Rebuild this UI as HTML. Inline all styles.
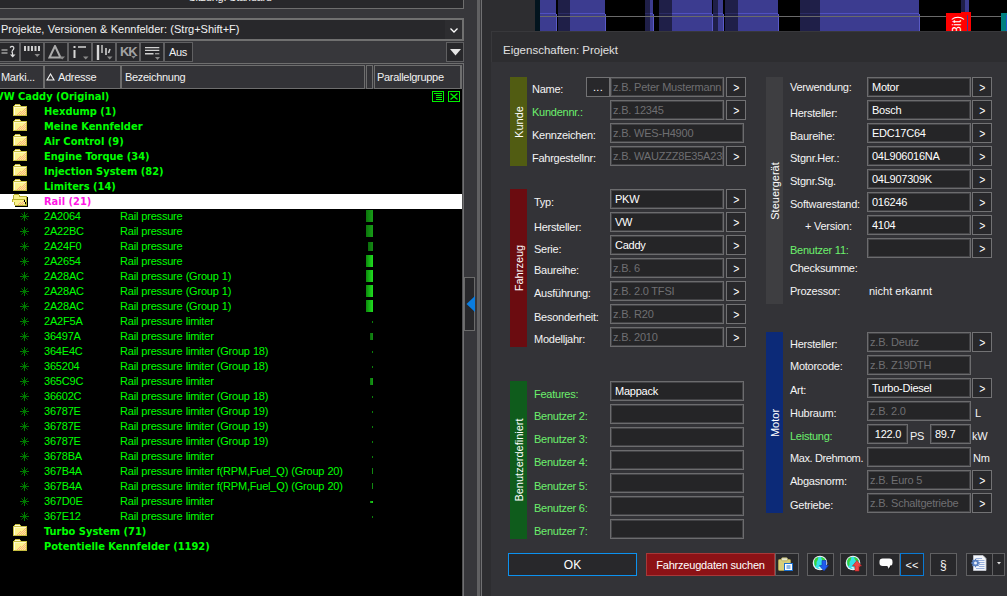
<!DOCTYPE html>
<html lang="de"><head><meta charset="utf-8"><title>Eigenschaften: Projekt</title>
<style>
html,body{margin:0;padding:0;background:#2d2d30;}
body{width:1007px;height:596px;overflow:hidden;position:relative;font-family:"Liberation Sans",sans-serif;font-size:11px;color:#fff;letter-spacing:-0.25px;}
.ab{position:absolute;display:block}
.t{position:absolute;white-space:nowrap;line-height:15px;height:15px}
.tb{font-family:"DejaVu Sans Condensed","Liberation Sans",sans-serif;font-weight:bold;font-size:11px;color:#00ff00;letter-spacing:0}
.tr{color:#00ff00;font-size:11px;letter-spacing:-0.2px;word-spacing:0.3px}
.btn{position:absolute;box-sizing:border-box;border:1px solid #606062;background:#28282b}
.hd{position:absolute;box-sizing:border-box;top:65px;height:24px;background:#333337;border:1px solid #6e6e6e;line-height:23px;color:#f0f0f0;font-size:11px;white-space:nowrap;overflow:hidden;letter-spacing:-0.3px}
.in{position:absolute;box-sizing:border-box;height:20px;border:1px solid #6c6c6e;box-shadow:inset 0 0 0 1px #434346;background:#252527;color:#fff;font-size:11px;line-height:19px;padding:0 0 0 4px;white-space:nowrap;overflow:hidden}
.in.ph{color:#6f6f72;padding-left:2px;letter-spacing:-0.2px}
.gt{position:absolute;box-sizing:border-box;width:20px;height:20px;border:1px solid #727274;background:#28282b;color:#fff;font-size:11px;line-height:19px;text-align:center;letter-spacing:0}
.gt b{display:inline-block;font-weight:normal;transform:scale(0.95,1.2)}
.lb{position:absolute;white-space:nowrap;font-size:11px;line-height:14px;color:#f4f4f4}
.lb.g{color:#6cf06c}
.strip{position:absolute;width:17px}
.strip span{position:absolute;left:50%;top:50%;white-space:nowrap;font-size:11px;line-height:14px;letter-spacing:0;color:#fff;transform:translate(-50%,-50%) rotate(-90deg)}
</style></head><body>
<svg width="0" height="0" style="position:absolute"><defs><pattern id="dz" width="2" height="2" patternUnits="userSpaceOnUse"><rect width="1" height="1" fill="#f9ae80"/><rect x="1" y="1" width="1" height="1" fill="#f9ae80"/></pattern></defs></svg>

<div class="ab" style="left:0;top:0;width:477px;height:596px;background:#37373b"></div>
<div class="ab" style="left:0;top:0;width:463px;height:8px;background:#28282b;border-right:1px solid #6e6e6e;border-bottom:1px solid #6e6e6e;overflow:hidden"><span class="t" style="left:188.5px;top:-10px;font-size:11px;color:#eee">Sitzung: Standard</span></div>
<div class="ab" style="left:-2px;top:18px;width:462px;height:19px;border:2px solid #707070;background:#28282b"><div class="ab" style="right:0;top:0;width:17px;height:19px;background:#2d2d30"></div><span class="t" style="left:1px;top:2px;font-size:11px;color:#f2f2f2;letter-spacing:0;word-spacing:0.3px">Projekte, Versionen &amp; Kennfelder: (Strg+Shift+F)</span><svg class="ab" style="left:450px;top:8px" width="8" height="5" viewBox="0 0 8 5"><path d="M0.5 0.5 L4 4 L7.5 0.5" stroke="#fff" stroke-width="1.3" fill="none"/></svg></div>
<div class="btn" style="left:-4px;top:42px;width:24px;height:20px"></div>
<div class="btn" style="left:20px;top:42px;width:24px;height:20px"></div>
<div class="btn" style="left:44px;top:42px;width:24px;height:20px"></div>
<div class="btn" style="left:68px;top:42px;width:24px;height:20px"></div>
<div class="btn" style="left:92px;top:42px;width:24px;height:20px"></div>
<div class="btn" style="left:116px;top:42px;width:24px;height:20px"></div>
<div class="btn" style="left:140px;top:42px;width:24px;height:20px"></div>
<div class="btn" style="left:164px;top:42px;width:29px;height:20px;color:#f0f0f0;font-size:11px;line-height:18px;padding-left:4px;letter-spacing:-0.4px">Aus</div>
<div class="btn" style="left:446px;top:42px;width:18px;height:20px"><svg class="ab" style="left:3px;top:6px" width="11" height="7" viewBox="0 0 11 7"><path d="M0 0 H11 L5.5 6.5 Z" fill="#e6e6e6"/></svg></div>
<svg class="ab" style="left:1px;top:49px" width="7" height="5" viewBox="0 0 7 5"><path d="M0.5 1 H6.5 M0.5 4 H6.5" stroke="#d8d8d8" stroke-width="1"/></svg>
<svg class="ab" style="left:9px;top:45px" width="9" height="14" viewBox="0 0 9 14"><path d="M1 2.5 Q3 0.5 4.5 2 Q5.5 3.5 3.5 5.5 Q2.5 7 3.5 8 V10" stroke="#e0e0e0" stroke-width="1.2" fill="none"/><path d="M1 9.5 H6.5 L3.7 12.5 Z" fill="#e0e0e0"/></svg>
<svg class="ab" style="left:24px;top:46px" width="17" height="12" viewBox="0 0 17 12"><path d="M1 0 V5 M4.5 0 V5 M8 0 V5 M11.5 0 V5 M15 0 V5" stroke="#cfcfcf" stroke-width="2" fill="none"/><path d="M10.5 8 H16 L13.2 11 Z" fill="#8a8a8a"/></svg>
<svg class="ab" style="left:48px;top:45px" width="18" height="15" viewBox="0 0 18 15"><path d="M7 1 L1.5 12.5 H12.5 Z" stroke="#aaa" stroke-width="2" fill="none"/><path d="M11.5 11.5 H17 L14.2 14.5 Z" fill="#8a8a8a"/></svg>
<svg class="ab" style="left:73px;top:46px" width="17" height="14" viewBox="0 0 17 14"><path d="M1.5 0 V2 M1.5 4 V12 " stroke="#d5d5d5" stroke-width="2" fill="none"/><path d="M5 1 H13" stroke="#d5d5d5" stroke-width="1.5"/><path d="M10 10.5 H15.5 L12.7 13.5 Z" fill="#8a8a8a"/></svg>
<svg class="ab" style="left:96px;top:45px" width="18" height="15" viewBox="0 0 18 15"><path d="M2 0 V15" stroke="#d8d8d8" stroke-width="2.4"/><path d="M6 0 V8" stroke="#bbb" stroke-width="1.6"/><path d="M10 3 V10" stroke="#d0d0d0" stroke-width="1.6"/><path d="M14 4 L12.5 8" stroke="#d0d0d0" stroke-width="1.6"/><path d="M11 11.5 H16.5 L13.7 14.5 Z" fill="#8a8a8a"/></svg>
<span class="t" style="left:120px;top:43.5px;font-size:13px;font-weight:bold;color:#a2a2a2;letter-spacing:-1.1px;line-height:16px">KK</span><svg class="ab" style="left:131px;top:56px" width="5" height="3" viewBox="0 0 6 4"><path d="M0 0 H6 L3 3.5 Z" fill="#8a8a8a"/></svg>
<svg class="ab" style="left:145px;top:46px" width="16" height="15" viewBox="0 0 16 15"><path d="M0 1.6 H14.3 M0 4.4 H14.3 M0 7.7 H8.5" stroke="#d2d2d2" stroke-width="1.4"/><path d="M10 7.7 H14.3" stroke="#9a9a9a" stroke-width="1.4"/><path d="M10 11 H15 L12.5 14 Z" fill="#8a8a8a"/></svg>
<div class="ab" style="left:0;top:63px;width:464px;height:1px;background:#6e6e6e"></div>
<div class="hd" style="left:-1px;width:45px;padding-left:1px">Marki...</div>
<div class="hd" style="left:44px;width:77px;padding-left:13px">Adresse<svg class="ab" style="left:1px;top:7px" width="9" height="8" viewBox="0 0 9 8"><path d="M4.5 1 L8 7 H1 Z" stroke="#f4f4f4" stroke-width="1.1" fill="none"/></svg></div>
<div class="hd" style="left:121px;width:244px;padding-left:3px">Bezeichnung</div>
<div class="hd" style="left:366px;width:7px"></div>
<div class="hd" style="left:374px;width:88px;padding-left:2px;border-right-width:2px">Parallelgruppe</div>
<div class="ab" style="left:462px;top:89px;width:1px;height:507px;background:#505052"></div><div class="ab" style="left:461px;top:524px;width:1px;height:6px;background:#3a3a3c"></div><div class="ab" style="left:463px;top:63px;width:1px;height:533px;background:#707072"></div>
<div class="ab" style="left:0;top:89px;width:462px;height:507px;background:#000;overflow:hidden">
<span class="t tb" style="left:-4px;top:0">VW Caddy (Original)</span>
<svg class="ab" style="left:432px;top:2px" width="12" height="11" viewBox="0 0 12 11"><rect x="0.5" y="0.5" width="11" height="10" fill="none" stroke="#00f000"/><path d="M2 2.5 H10 M4 4.5 H10 M4 6.5 H10 M4 8.5 H10" stroke="#00f000" stroke-width="1" shape-rendering="crispEdges"/></svg>
<svg class="ab" style="left:448px;top:2px" width="12" height="11" viewBox="0 0 12 11"><rect x="0.5" y="0.5" width="11" height="10" fill="none" stroke="#00f000"/><path d="M2.5 2.5 L9.5 8.5 M9.5 2.5 L2.5 8.5" stroke="#00f000" stroke-width="1.4"/></svg>
<svg class="ab" style="left:13px;top:15px" width="14" height="12" viewBox="0 0 14 12" shape-rendering="crispEdges"><path d="M0 2 H1 L2 0 H7 L8 2 H14 V12 H0 Z" fill="#c6bd40"/><rect x="1" y="3" width="12" height="8" fill="#fdf38c"/><rect x="2" y="1" width="5" height="1" fill="#fffbd6"/><rect x="1" y="3" width="12" height="1" fill="#fff9c4"/><rect x="1" y="3" width="1" height="8" fill="#fffde4"/><polygon points="13,4 13,11 2,11" fill="url(#dz)"/></svg>
<span class="t tb" style="left:44px;top:15px">Hexdump (1)</span>
<svg class="ab" style="left:13px;top:30px" width="14" height="12" viewBox="0 0 14 12" shape-rendering="crispEdges"><path d="M0 2 H1 L2 0 H7 L8 2 H14 V12 H0 Z" fill="#c6bd40"/><rect x="1" y="3" width="12" height="8" fill="#fdf38c"/><rect x="2" y="1" width="5" height="1" fill="#fffbd6"/><rect x="1" y="3" width="12" height="1" fill="#fff9c4"/><rect x="1" y="3" width="1" height="8" fill="#fffde4"/><polygon points="13,4 13,11 2,11" fill="url(#dz)"/></svg>
<span class="t tb" style="left:44px;top:30px">Meine Kennfelder</span>
<svg class="ab" style="left:13px;top:45px" width="14" height="12" viewBox="0 0 14 12" shape-rendering="crispEdges"><path d="M0 2 H1 L2 0 H7 L8 2 H14 V12 H0 Z" fill="#c6bd40"/><rect x="1" y="3" width="12" height="8" fill="#fdf38c"/><rect x="2" y="1" width="5" height="1" fill="#fffbd6"/><rect x="1" y="3" width="12" height="1" fill="#fff9c4"/><rect x="1" y="3" width="1" height="8" fill="#fffde4"/><polygon points="13,4 13,11 2,11" fill="url(#dz)"/></svg>
<span class="t tb" style="left:44px;top:45px">Air Control (9)</span>
<svg class="ab" style="left:13px;top:60px" width="14" height="12" viewBox="0 0 14 12" shape-rendering="crispEdges"><path d="M0 2 H1 L2 0 H7 L8 2 H14 V12 H0 Z" fill="#c6bd40"/><rect x="1" y="3" width="12" height="8" fill="#fdf38c"/><rect x="2" y="1" width="5" height="1" fill="#fffbd6"/><rect x="1" y="3" width="12" height="1" fill="#fff9c4"/><rect x="1" y="3" width="1" height="8" fill="#fffde4"/><polygon points="13,4 13,11 2,11" fill="url(#dz)"/></svg>
<span class="t tb" style="left:44px;top:60px">Engine Torque (34)</span>
<svg class="ab" style="left:13px;top:75px" width="14" height="12" viewBox="0 0 14 12" shape-rendering="crispEdges"><path d="M0 2 H1 L2 0 H7 L8 2 H14 V12 H0 Z" fill="#c6bd40"/><rect x="1" y="3" width="12" height="8" fill="#fdf38c"/><rect x="2" y="1" width="5" height="1" fill="#fffbd6"/><rect x="1" y="3" width="12" height="1" fill="#fff9c4"/><rect x="1" y="3" width="1" height="8" fill="#fffde4"/><polygon points="13,4 13,11 2,11" fill="url(#dz)"/></svg>
<span class="t tb" style="left:44px;top:75px">Injection System (82)</span>
<svg class="ab" style="left:13px;top:90px" width="14" height="12" viewBox="0 0 14 12" shape-rendering="crispEdges"><path d="M0 2 H1 L2 0 H7 L8 2 H14 V12 H0 Z" fill="#c6bd40"/><rect x="1" y="3" width="12" height="8" fill="#fdf38c"/><rect x="2" y="1" width="5" height="1" fill="#fffbd6"/><rect x="1" y="3" width="12" height="1" fill="#fff9c4"/><rect x="1" y="3" width="1" height="8" fill="#fffde4"/><polygon points="13,4 13,11 2,11" fill="url(#dz)"/></svg>
<span class="t tb" style="left:44px;top:90px">Limiters (14)</span>
<div class="ab" style="left:0;top:105px;width:462px;height:15px;background:#fff"></div>
<svg class="ab" style="left:12px;top:105px" width="16" height="13" viewBox="0 0 16 13" shape-rendering="crispEdges"><rect x="15" y="3" width="1" height="10" fill="#000"/><rect x="3" y="12" width="13" height="1" fill="#000"/><path d="M1 2 L2 0 H7 L8 2 H15 V12 H13 V5 H1 Z" fill="#b8b030"/><path d="M2 2 L2.6 1 H6.4 L7 2 V3 H14 V10 H13 V5 H2 Z" fill="#f8f08a"/><path d="M0 5 H12 L13 6 V8 L14 9 V10 L13 12 H3 L2 11 V9 L1 8 H0 Z" fill="#b8b030"/><path d="M1 6 H12 V8 L13 9 V10 L12.5 11 H3 V9 L2 8 H1 Z" fill="#fbf28c"/><polygon points="12,6 12,11 4,11" fill="url(#dz)"/><rect x="12" y="6" width="1" height="2" fill="#000"/><rect x="13" y="8" width="1" height="2" fill="#000"/></svg>
<span class="t tb" style="left:44px;top:105px;color:#ff16e6">Rail (21)</span>
<svg class="ab" style="left:20px;top:123px" width="9" height="9" viewBox="0 0 9 9"><path d="M4.5 0 V9 M0 4.5 H9" stroke="#007c00" stroke-width="1" fill="none" shape-rendering="crispEdges"/><path d="M1.4 1.4 L7.6 7.6 M7.6 1.4 L1.4 7.6" stroke="#007c00" stroke-width="0.9" fill="none"/><rect x="3" y="3" width="3" height="3" fill="#007800"/></svg>
<span class="t tr" style="left:44px;top:120px">2A2064</span><span class="t tr" style="left:120px;top:120px">Rail pressure</span>
<div class="ab" style="left:366px;top:121px;width:7px;height:12px;background:linear-gradient(90deg,#0b760b,#189e18)"></div>
<svg class="ab" style="left:20px;top:138px" width="9" height="9" viewBox="0 0 9 9"><path d="M4.5 0 V9 M0 4.5 H9" stroke="#007c00" stroke-width="1" fill="none" shape-rendering="crispEdges"/><path d="M1.4 1.4 L7.6 7.6 M7.6 1.4 L1.4 7.6" stroke="#007c00" stroke-width="0.9" fill="none"/><rect x="3" y="3" width="3" height="3" fill="#007800"/></svg>
<span class="t tr" style="left:44px;top:135px">2A22BC</span><span class="t tr" style="left:120px;top:135px">Rail pressure</span>
<div class="ab" style="left:366px;top:136px;width:7px;height:12px;background:linear-gradient(90deg,#0b760b,#189e18)"></div>
<svg class="ab" style="left:20px;top:153px" width="9" height="9" viewBox="0 0 9 9"><path d="M4.5 0 V9 M0 4.5 H9" stroke="#007c00" stroke-width="1" fill="none" shape-rendering="crispEdges"/><path d="M1.4 1.4 L7.6 7.6 M7.6 1.4 L1.4 7.6" stroke="#007c00" stroke-width="0.9" fill="none"/><rect x="3" y="3" width="3" height="3" fill="#007800"/></svg>
<span class="t tr" style="left:44px;top:150px">2A24F0</span><span class="t tr" style="left:120px;top:150px">Rail pressure</span>
<div class="ab" style="left:368px;top:153px;width:5px;height:9px;background:linear-gradient(90deg,#0a6c0a,#158a15)"></div>
<svg class="ab" style="left:20px;top:168px" width="9" height="9" viewBox="0 0 9 9"><path d="M4.5 0 V9 M0 4.5 H9" stroke="#007c00" stroke-width="1" fill="none" shape-rendering="crispEdges"/><path d="M1.4 1.4 L7.6 7.6 M7.6 1.4 L1.4 7.6" stroke="#007c00" stroke-width="0.9" fill="none"/><rect x="3" y="3" width="3" height="3" fill="#007800"/></svg>
<span class="t tr" style="left:44px;top:165px">2A2654</span><span class="t tr" style="left:120px;top:165px">Rail pressure</span>
<div class="ab" style="left:366px;top:166px;width:7px;height:12px;background:linear-gradient(90deg,#0c8a0c,#20e020)"></div>
<svg class="ab" style="left:20px;top:183px" width="9" height="9" viewBox="0 0 9 9"><path d="M4.5 0 V9 M0 4.5 H9" stroke="#007c00" stroke-width="1" fill="none" shape-rendering="crispEdges"/><path d="M1.4 1.4 L7.6 7.6 M7.6 1.4 L1.4 7.6" stroke="#007c00" stroke-width="0.9" fill="none"/><rect x="3" y="3" width="3" height="3" fill="#007800"/></svg>
<span class="t tr" style="left:44px;top:180px">2A28AC</span><span class="t tr" style="left:120px;top:180px">Rail pressure (Group 1)</span>
<div class="ab" style="left:366px;top:181px;width:7px;height:12px;background:linear-gradient(90deg,#0c8a0c,#20e020)"></div>
<svg class="ab" style="left:20px;top:198px" width="9" height="9" viewBox="0 0 9 9"><path d="M4.5 0 V9 M0 4.5 H9" stroke="#007c00" stroke-width="1" fill="none" shape-rendering="crispEdges"/><path d="M1.4 1.4 L7.6 7.6 M7.6 1.4 L1.4 7.6" stroke="#007c00" stroke-width="0.9" fill="none"/><rect x="3" y="3" width="3" height="3" fill="#007800"/></svg>
<span class="t tr" style="left:44px;top:195px">2A28AC</span><span class="t tr" style="left:120px;top:195px">Rail pressure (Group 1)</span>
<div class="ab" style="left:366px;top:196px;width:7px;height:12px;background:linear-gradient(90deg,#0c8a0c,#20e020)"></div>
<svg class="ab" style="left:20px;top:213px" width="9" height="9" viewBox="0 0 9 9"><path d="M4.5 0 V9 M0 4.5 H9" stroke="#007c00" stroke-width="1" fill="none" shape-rendering="crispEdges"/><path d="M1.4 1.4 L7.6 7.6 M7.6 1.4 L1.4 7.6" stroke="#007c00" stroke-width="0.9" fill="none"/><rect x="3" y="3" width="3" height="3" fill="#007800"/></svg>
<span class="t tr" style="left:44px;top:210px">2A28AC</span><span class="t tr" style="left:120px;top:210px">Rail pressure (Group 1)</span>
<div class="ab" style="left:366px;top:211px;width:7px;height:12px;background:linear-gradient(90deg,#0c8a0c,#20e020)"></div>
<svg class="ab" style="left:20px;top:228px" width="9" height="9" viewBox="0 0 9 9"><path d="M4.5 0 V9 M0 4.5 H9" stroke="#007c00" stroke-width="1" fill="none" shape-rendering="crispEdges"/><path d="M1.4 1.4 L7.6 7.6 M7.6 1.4 L1.4 7.6" stroke="#007c00" stroke-width="0.9" fill="none"/><rect x="3" y="3" width="3" height="3" fill="#007800"/></svg>
<span class="t tr" style="left:44px;top:225px">2A2F5A</span><span class="t tr" style="left:120px;top:225px">Rail pressure limiter</span>
<div class="ab" style="left:372px;top:232px;width:1px;height:2px;background:#0a800a"></div>
<svg class="ab" style="left:20px;top:243px" width="9" height="9" viewBox="0 0 9 9"><path d="M4.5 0 V9 M0 4.5 H9" stroke="#007c00" stroke-width="1" fill="none" shape-rendering="crispEdges"/><path d="M1.4 1.4 L7.6 7.6 M7.6 1.4 L1.4 7.6" stroke="#007c00" stroke-width="0.9" fill="none"/><rect x="3" y="3" width="3" height="3" fill="#007800"/></svg>
<span class="t tr" style="left:44px;top:240px">36497A</span><span class="t tr" style="left:120px;top:240px">Rail pressure limiter</span>
<div class="ab" style="left:370px;top:244px;width:3px;height:7px;background:linear-gradient(90deg,#0a6c0a,#158a15)"></div>
<svg class="ab" style="left:20px;top:258px" width="9" height="9" viewBox="0 0 9 9"><path d="M4.5 0 V9 M0 4.5 H9" stroke="#007c00" stroke-width="1" fill="none" shape-rendering="crispEdges"/><path d="M1.4 1.4 L7.6 7.6 M7.6 1.4 L1.4 7.6" stroke="#007c00" stroke-width="0.9" fill="none"/><rect x="3" y="3" width="3" height="3" fill="#007800"/></svg>
<span class="t tr" style="left:44px;top:255px">364E4C</span><span class="t tr" style="left:120px;top:255px">Rail pressure limiter (Group 18)</span>
<div class="ab" style="left:372px;top:262px;width:1px;height:2px;background:#0a800a"></div>
<svg class="ab" style="left:20px;top:273px" width="9" height="9" viewBox="0 0 9 9"><path d="M4.5 0 V9 M0 4.5 H9" stroke="#007c00" stroke-width="1" fill="none" shape-rendering="crispEdges"/><path d="M1.4 1.4 L7.6 7.6 M7.6 1.4 L1.4 7.6" stroke="#007c00" stroke-width="0.9" fill="none"/><rect x="3" y="3" width="3" height="3" fill="#007800"/></svg>
<span class="t tr" style="left:44px;top:270px">365204</span><span class="t tr" style="left:120px;top:270px">Rail pressure limiter (Group 18)</span>
<div class="ab" style="left:372px;top:277px;width:1px;height:2px;background:#0a800a"></div>
<svg class="ab" style="left:20px;top:288px" width="9" height="9" viewBox="0 0 9 9"><path d="M4.5 0 V9 M0 4.5 H9" stroke="#007c00" stroke-width="1" fill="none" shape-rendering="crispEdges"/><path d="M1.4 1.4 L7.6 7.6 M7.6 1.4 L1.4 7.6" stroke="#007c00" stroke-width="0.9" fill="none"/><rect x="3" y="3" width="3" height="3" fill="#007800"/></svg>
<span class="t tr" style="left:44px;top:285px">365C9C</span><span class="t tr" style="left:120px;top:285px">Rail pressure limiter</span>
<div class="ab" style="left:370px;top:289px;width:3px;height:7px;background:linear-gradient(90deg,#0b760b,#189e18)"></div>
<svg class="ab" style="left:20px;top:303px" width="9" height="9" viewBox="0 0 9 9"><path d="M4.5 0 V9 M0 4.5 H9" stroke="#007c00" stroke-width="1" fill="none" shape-rendering="crispEdges"/><path d="M1.4 1.4 L7.6 7.6 M7.6 1.4 L1.4 7.6" stroke="#007c00" stroke-width="0.9" fill="none"/><rect x="3" y="3" width="3" height="3" fill="#007800"/></svg>
<span class="t tr" style="left:44px;top:300px">36602C</span><span class="t tr" style="left:120px;top:300px">Rail pressure limiter (Group 18)</span>
<div class="ab" style="left:372px;top:307px;width:1px;height:2px;background:#0a800a"></div>
<svg class="ab" style="left:20px;top:318px" width="9" height="9" viewBox="0 0 9 9"><path d="M4.5 0 V9 M0 4.5 H9" stroke="#007c00" stroke-width="1" fill="none" shape-rendering="crispEdges"/><path d="M1.4 1.4 L7.6 7.6 M7.6 1.4 L1.4 7.6" stroke="#007c00" stroke-width="0.9" fill="none"/><rect x="3" y="3" width="3" height="3" fill="#007800"/></svg>
<span class="t tr" style="left:44px;top:315px">36787E</span><span class="t tr" style="left:120px;top:315px">Rail pressure limiter (Group 19)</span>
<div class="ab" style="left:372px;top:322px;width:1px;height:2px;background:#0a800a"></div>
<svg class="ab" style="left:20px;top:333px" width="9" height="9" viewBox="0 0 9 9"><path d="M4.5 0 V9 M0 4.5 H9" stroke="#007c00" stroke-width="1" fill="none" shape-rendering="crispEdges"/><path d="M1.4 1.4 L7.6 7.6 M7.6 1.4 L1.4 7.6" stroke="#007c00" stroke-width="0.9" fill="none"/><rect x="3" y="3" width="3" height="3" fill="#007800"/></svg>
<span class="t tr" style="left:44px;top:330px">36787E</span><span class="t tr" style="left:120px;top:330px">Rail pressure limiter (Group 19)</span>
<div class="ab" style="left:372px;top:337px;width:1px;height:2px;background:#0a800a"></div>
<svg class="ab" style="left:20px;top:348px" width="9" height="9" viewBox="0 0 9 9"><path d="M4.5 0 V9 M0 4.5 H9" stroke="#007c00" stroke-width="1" fill="none" shape-rendering="crispEdges"/><path d="M1.4 1.4 L7.6 7.6 M7.6 1.4 L1.4 7.6" stroke="#007c00" stroke-width="0.9" fill="none"/><rect x="3" y="3" width="3" height="3" fill="#007800"/></svg>
<span class="t tr" style="left:44px;top:345px">36787E</span><span class="t tr" style="left:120px;top:345px">Rail pressure limiter (Group 19)</span>
<div class="ab" style="left:372px;top:352px;width:1px;height:2px;background:#0a800a"></div>
<svg class="ab" style="left:20px;top:363px" width="9" height="9" viewBox="0 0 9 9"><path d="M4.5 0 V9 M0 4.5 H9" stroke="#007c00" stroke-width="1" fill="none" shape-rendering="crispEdges"/><path d="M1.4 1.4 L7.6 7.6 M7.6 1.4 L1.4 7.6" stroke="#007c00" stroke-width="0.9" fill="none"/><rect x="3" y="3" width="3" height="3" fill="#007800"/></svg>
<span class="t tr" style="left:44px;top:360px">3678BA</span><span class="t tr" style="left:120px;top:360px">Rail pressure limiter</span>
<div class="ab" style="left:372px;top:367px;width:1px;height:2px;background:#0a800a"></div>
<svg class="ab" style="left:20px;top:378px" width="9" height="9" viewBox="0 0 9 9"><path d="M4.5 0 V9 M0 4.5 H9" stroke="#007c00" stroke-width="1" fill="none" shape-rendering="crispEdges"/><path d="M1.4 1.4 L7.6 7.6 M7.6 1.4 L1.4 7.6" stroke="#007c00" stroke-width="0.9" fill="none"/><rect x="3" y="3" width="3" height="3" fill="#007800"/></svg>
<span class="t tr" style="left:44px;top:375px">367B4A</span><span class="t tr" style="left:120px;top:375px">Rail pressure limiter f(RPM,Fuel_Q) (Group 20)</span>
<div class="ab" style="left:372px;top:379px;width:1px;height:6px;background:linear-gradient(90deg,#0b760b,#189e18)"></div>
<svg class="ab" style="left:20px;top:393px" width="9" height="9" viewBox="0 0 9 9"><path d="M4.5 0 V9 M0 4.5 H9" stroke="#007c00" stroke-width="1" fill="none" shape-rendering="crispEdges"/><path d="M1.4 1.4 L7.6 7.6 M7.6 1.4 L1.4 7.6" stroke="#007c00" stroke-width="0.9" fill="none"/><rect x="3" y="3" width="3" height="3" fill="#007800"/></svg>
<span class="t tr" style="left:44px;top:390px">367B4A</span><span class="t tr" style="left:120px;top:390px">Rail pressure limiter f(RPM,Fuel_Q) (Group 20)</span>
<div class="ab" style="left:372px;top:394px;width:1px;height:6px;background:linear-gradient(90deg,#0b760b,#189e18)"></div>
<svg class="ab" style="left:20px;top:408px" width="9" height="9" viewBox="0 0 9 9"><path d="M4.5 0 V9 M0 4.5 H9" stroke="#007c00" stroke-width="1" fill="none" shape-rendering="crispEdges"/><path d="M1.4 1.4 L7.6 7.6 M7.6 1.4 L1.4 7.6" stroke="#007c00" stroke-width="0.9" fill="none"/><rect x="3" y="3" width="3" height="3" fill="#007800"/></svg>
<span class="t tr" style="left:44px;top:405px">367D0E</span><span class="t tr" style="left:120px;top:405px">Rail pressure limiter</span>
<div class="ab" style="left:370px;top:412px;width:3px;height:2px;background:linear-gradient(90deg,#0c8a0c,#20e020)"></div>
<svg class="ab" style="left:20px;top:423px" width="9" height="9" viewBox="0 0 9 9"><path d="M4.5 0 V9 M0 4.5 H9" stroke="#007c00" stroke-width="1" fill="none" shape-rendering="crispEdges"/><path d="M1.4 1.4 L7.6 7.6 M7.6 1.4 L1.4 7.6" stroke="#007c00" stroke-width="0.9" fill="none"/><rect x="3" y="3" width="3" height="3" fill="#007800"/></svg>
<span class="t tr" style="left:44px;top:420px">367E12</span><span class="t tr" style="left:120px;top:420px">Rail pressure limiter</span>
<div class="ab" style="left:372px;top:427px;width:1px;height:2px;background:#0a800a"></div>
<svg class="ab" style="left:13px;top:435px" width="14" height="12" viewBox="0 0 14 12" shape-rendering="crispEdges"><path d="M0 2 H1 L2 0 H7 L8 2 H14 V12 H0 Z" fill="#c6bd40"/><rect x="1" y="3" width="12" height="8" fill="#fdf38c"/><rect x="2" y="1" width="5" height="1" fill="#fffbd6"/><rect x="1" y="3" width="12" height="1" fill="#fff9c4"/><rect x="1" y="3" width="1" height="8" fill="#fffde4"/><polygon points="13,4 13,11 2,11" fill="url(#dz)"/></svg>
<span class="t tb" style="left:44px;top:435px">Turbo System (71)</span>
<svg class="ab" style="left:13px;top:450px" width="14" height="12" viewBox="0 0 14 12" shape-rendering="crispEdges"><path d="M0 2 H1 L2 0 H7 L8 2 H14 V12 H0 Z" fill="#c6bd40"/><rect x="1" y="3" width="12" height="8" fill="#fdf38c"/><rect x="2" y="1" width="5" height="1" fill="#fffbd6"/><rect x="1" y="3" width="12" height="1" fill="#fff9c4"/><rect x="1" y="3" width="1" height="8" fill="#fffde4"/><polygon points="13,4 13,11 2,11" fill="url(#dz)"/></svg>
<span class="t tb" style="left:44px;top:450px">Potentielle Kennfelder (1192)</span>
</div>
<div class="ab" style="left:477px;top:0;width:3px;height:596px;background:#616163"></div>
<div class="ab" style="left:480px;top:0;width:1px;height:596px;background:#3a3a3d"></div>
<div class="ab" style="left:481px;top:0;width:1px;height:596px;background:#707072"></div>
<div class="ab" style="left:464px;top:277px;width:11px;height:54px;box-sizing:border-box;border:1px solid #6a6a6a;background:#28282b"><svg class="ab" style="left:1px;top:18px" width="9" height="16" viewBox="0 0 9 16"><path d="M9 0 V16 L0.5 8 Z" fill="#0a7de0"/></svg></div>
<div class="ab" style="left:535px;top:0;width:472px;height:31px;background:#000;overflow:hidden">
<div class="ab" style="left:0px;top:0;width:5px;height:31px;background:#02141e"></div>
<div class="ab" style="left:5px;top:0;width:16px;height:31px;background:#3c3c90"></div>
<div class="ab" style="left:5px;top:13px;width:16px;height:1px;background:#5050c0"></div>
<div class="ab" style="left:21px;top:14px;width:1px;height:17px;background:#5a5ac6"></div>
<div class="ab" style="left:23px;top:0;width:12px;height:31px;background:#1f1f48"></div>
<div class="ab" style="left:23px;top:13px;width:12px;height:1px;background:#2b2b64"></div>
<div class="ab" style="left:35px;top:0;width:35px;height:31px;background:#3c3c90"></div>
<div class="ab" style="left:35px;top:13px;width:35px;height:1px;background:#5050c0"></div>
<div class="ab" style="left:70px;top:14px;width:1px;height:17px;background:#5a5ac6"></div>
<div class="ab" style="left:110px;top:0;width:5px;height:31px;background:#1f1f48"></div>
<div class="ab" style="left:110px;top:13px;width:5px;height:1px;background:#2b2b64"></div>
<div class="ab" style="left:115px;top:0;width:3px;height:31px;background:#3c3c90"></div>
<div class="ab" style="left:115px;top:13px;width:3px;height:1px;background:#5050c0"></div>
<div class="ab" style="left:118px;top:14px;width:1px;height:17px;background:#5a5ac6"></div>
<div class="ab" style="left:124px;top:0;width:13px;height:31px;background:#1f1f48"></div>
<div class="ab" style="left:124px;top:13px;width:13px;height:1px;background:#2b2b64"></div>
<div class="ab" style="left:137px;top:0;width:40px;height:31px;background:#3c3c90"></div>
<div class="ab" style="left:137px;top:13px;width:40px;height:1px;background:#5050c0"></div>
<div class="ab" style="left:177px;top:14px;width:1px;height:17px;background:#5a5ac6"></div>
<div class="ab" style="left:178px;top:0;width:5px;height:31px;background:#1f1f48"></div>
<div class="ab" style="left:178px;top:13px;width:5px;height:1px;background:#2b2b64"></div>
<div class="ab" style="left:183px;top:0;width:5px;height:31px;background:#3c3c90"></div>
<div class="ab" style="left:183px;top:13px;width:5px;height:1px;background:#5050c0"></div>
<div class="ab" style="left:188px;top:14px;width:1px;height:17px;background:#5a5ac6"></div>
<div class="ab" style="left:190px;top:0;width:13px;height:31px;background:#1f1f48"></div>
<div class="ab" style="left:190px;top:13px;width:13px;height:1px;background:#2b2b64"></div>
<div class="ab" style="left:203px;top:0;width:40px;height:31px;background:#3c3c90"></div>
<div class="ab" style="left:203px;top:13px;width:40px;height:1px;background:#5050c0"></div>
<div class="ab" style="left:243px;top:14px;width:1px;height:17px;background:#5a5ac6"></div>
<div class="ab" style="left:265px;top:0;width:20px;height:31px;background:#1f1f48"></div>
<div class="ab" style="left:265px;top:13px;width:20px;height:1px;background:#2b2b64"></div>
<div class="ab" style="left:285px;top:0;width:99px;height:31px;background:#3c3c90"></div>
<div class="ab" style="left:285px;top:13px;width:99px;height:1px;background:#5050c0"></div>
<div class="ab" style="left:384px;top:14px;width:1px;height:17px;background:#5a5ac6"></div>
<div class="ab" style="left:426px;top:0;width:4px;height:13px;background:#1f1f48"></div><div class="ab" style="left:430px;top:0;width:4px;height:13px;background:#3c3c90"></div>
<div class="ab" style="left:5px;top:16px;width:467px;height:1px;background:#6a6a6a"></div>
<div class="ab" style="left:411px;top:13px;width:25px;height:18px;background:#ff0000;overflow:hidden"><span style="position:absolute;left:11px;top:12px;white-space:nowrap;font-size:12px;letter-spacing:0;color:#fff;transform:translate(-50%,-50%) rotate(-90deg);transform-origin:center">Bit)</span></div>
<div class="ab" style="left:432px;top:15px;width:1px;height:16px;background:#3c3c90"></div><div class="ab" style="left:426px;top:12px;width:10px;height:2px;background:#ff0000"></div>
<div class="ab" style="left:466px;top:13px;width:6px;height:18px;background:#008080"></div><div class="ab" style="left:471px;top:15px;width:1px;height:16px;background:#1c58c8"></div>
</div>
<div class="ab" style="left:491px;top:31px;width:516px;height:565px;background:#333337"></div>
<div class="ab" style="left:491px;top:31px;width:516px;height:31px;background:#2d2d30;border-left:1px solid #38383b;border-top:1px solid #38383b;box-sizing:border-box"></div>
<span class="lb" style="left:503px;top:42.5px;font-size:11.5px;color:#e0e0e0;letter-spacing:0">Eigenschaften: Projekt</span>
<div class="strip" style="left:510px;top:77px;height:89px;background:#515c12"><span>Kunde</span></div>
<div class="gt" style="left:586px;top:77px;width:24px;line-height:19px;letter-spacing:0.3px">...</div>
<span class="lb" style="left:532px;top:82px">Name:</span>
<div class="in ph" style="left:610px;top:77px;width:114px">z.B. Peter Mustermann</div>
<div class="gt" style="left:726px;top:77px"><b>&gt;</b></div>
<span class="lb g" style="left:532px;top:105px">Kundennr.:</span>
<div class="in ph" style="left:610px;top:100px;width:114px">z.B. 12345</div>
<div class="gt" style="left:726px;top:100px"><b>&gt;</b></div>
<span class="lb" style="left:532px;top:128px">Kennzeichen:</span>
<div class="in ph" style="left:610px;top:123px;width:134px">z.B. WES-H4900</div>
<span class="lb" style="left:532px;top:151px">Fahrgestellnr:</span>
<div class="in ph" style="left:610px;top:146px;width:114px">z.B. WAUZZZ8E35A235</div>
<div class="gt" style="left:726px;top:146px"><b>&gt;</b></div>
<div class="strip" style="left:510px;top:189px;height:158px;background:#6b0c10"><span>Fahrzeug</span></div>
<span class="lb" style="left:534px;top:195px">Typ:</span>
<div class="in" style="left:610px;top:189px;width:114px">PKW</div>
<div class="gt" style="left:726px;top:189px"><b>&gt;</b></div>
<span class="lb" style="left:534px;top:220px">Hersteller:</span>
<div class="in" style="left:610px;top:212px;width:114px">VW</div>
<div class="gt" style="left:726px;top:212px"><b>&gt;</b></div>
<span class="lb" style="left:534px;top:242px">Serie:</span>
<div class="in" style="left:610px;top:235px;width:114px">Caddy</div>
<div class="gt" style="left:726px;top:235px"><b>&gt;</b></div>
<span class="lb" style="left:534px;top:263px">Baureihe:</span>
<div class="in ph" style="left:610px;top:258px;width:114px">z.B. 6</div>
<div class="gt" style="left:726px;top:258px"><b>&gt;</b></div>
<span class="lb" style="left:534px;top:286px">Ausführung:</span>
<div class="in ph" style="left:610px;top:281px;width:114px">z.B. 2.0 TFSI</div>
<div class="gt" style="left:726px;top:281px"><b>&gt;</b></div>
<span class="lb" style="left:534px;top:310px">Besonderheit:</span>
<div class="in ph" style="left:610px;top:304px;width:114px">z.B. R20</div>
<div class="gt" style="left:726px;top:304px"><b>&gt;</b></div>
<span class="lb" style="left:534px;top:332px">Modelljahr:</span>
<div class="in ph" style="left:610px;top:327px;width:114px">z.B. 2010</div>
<div class="gt" style="left:726px;top:327px"><b>&gt;</b></div>
<div class="strip" style="left:510px;top:381px;height:158px;background:#0f5c1c"><span>Benutzerdefiniert</span></div>
<span class="lb g" style="left:534px;top:387px">Features:</span>
<div class="in" style="left:610px;top:381px;width:134px">Mappack</div>
<span class="lb g" style="left:534px;top:409px">Benutzer 2:</span>
<div class="in" style="left:610px;top:404px;width:134px"></div>
<span class="lb g" style="left:534px;top:432px">Benutzer 3:</span>
<div class="in" style="left:610px;top:427px;width:134px"></div>
<span class="lb g" style="left:534px;top:455px">Benutzer 4:</span>
<div class="in" style="left:610px;top:450px;width:134px"></div>
<span class="lb g" style="left:534px;top:479px">Benutzer 5:</span>
<div class="in" style="left:610px;top:473px;width:134px"></div>
<span class="lb g" style="left:534px;top:501px">Benutzer 6:</span>
<div class="in" style="left:610px;top:496px;width:134px"></div>
<span class="lb g" style="left:534px;top:524px">Benutzer 7:</span>
<div class="in" style="left:610px;top:519px;width:134px"></div>
<div class="strip" style="left:766px;top:77px;height:227px;background:#3e3e41"><span>Steuergerät</span></div>
<span class="lb" style="left:790px;top:80px">Verwendung:</span>
<div class="in" style="left:867px;top:77px;width:104px">Motor</div>
<div class="gt" style="left:972px;top:77px"><b>&gt;</b></div>
<span class="lb" style="left:790px;top:106px">Hersteller:</span>
<div class="in" style="left:867px;top:100px;width:104px">Bosch</div>
<div class="gt" style="left:972px;top:100px"><b>&gt;</b></div>
<span class="lb" style="left:790px;top:128.5px">Baureihe:</span>
<div class="in" style="left:867px;top:123px;width:104px">EDC17C64</div>
<div class="gt" style="left:972px;top:123px"><b>&gt;</b></div>
<span class="lb" style="left:790px;top:151px">Stgnr.Her.:</span>
<div class="in" style="left:867px;top:146px;width:104px">04L906016NA</div>
<div class="gt" style="left:972px;top:146px"><b>&gt;</b></div>
<span class="lb" style="left:790px;top:174px">Stgnr.Stg.</span>
<div class="in" style="left:867px;top:169px;width:104px">04L907309K</div>
<div class="gt" style="left:972px;top:169px"><b>&gt;</b></div>
<span class="lb" style="left:790px;top:196.5px">Softwarestand:</span>
<div class="in" style="left:867px;top:192px;width:104px">016246</div>
<div class="gt" style="left:972px;top:192px"><b>&gt;</b></div>
<span class="lb" style="left:805px;top:219px">+ Version:</span>
<div class="in" style="left:867px;top:215px;width:104px">4104</div>
<div class="gt" style="left:972px;top:215px"><b>&gt;</b></div>
<span class="lb g" style="left:790px;top:242.5px">Benutzer 11:</span>
<div class="in" style="left:867px;top:238px;width:104px"></div>
<div class="gt" style="left:972px;top:238px"><b>&gt;</b></div>
<span class="lb" style="left:790px;top:261px">Checksumme:</span>
<span class="lb" style="left:790px;top:284px">Prozessor:</span>
<span class="lb" style="left:869px;top:284px;letter-spacing:0">nicht erkannt</span>
<div class="strip" style="left:766px;top:332px;height:181px;background:#0c2a78"><span>Motor</span></div>
<span class="lb" style="left:790px;top:337px">Hersteller:</span>
<div class="in ph" style="left:867px;top:332px;width:104px">z.B. Deutz</div>
<div class="gt" style="left:972px;top:332px"><b>&gt;</b></div>
<span class="lb" style="left:790px;top:359px">Motorcode:</span>
<div class="in ph" style="left:867px;top:355px;width:104px">z.B. Z19DTH</div>
<span class="lb" style="left:790px;top:382.5px">Art:</span>
<div class="in" style="left:867px;top:378px;width:104px">Turbo-Diesel</div>
<div class="gt" style="left:972px;top:378px"><b>&gt;</b></div>
<span class="lb" style="left:790px;top:406px">Hubraum:</span>
<div class="in ph" style="left:867px;top:401px;width:104px">z.B. 2.0</div>
<span class="lb" style="left:975px;top:406px">L</span>
<span class="lb g" style="left:790px;top:429px">Leistung:</span>
<div class="in" style="left:867px;top:424px;width:41px">&nbsp;122.0</div>
<span class="lb" style="left:910px;top:429px">PS</span>
<div class="in" style="left:930px;top:424px;width:41px">89.7</div>
<span class="lb" style="left:972px;top:429px">kW</span>
<span class="lb" style="left:790px;top:451px"><span style="letter-spacing:-0.4px">Max. Drehmom.</span></span>
<div class="in" style="left:867px;top:447px;width:104px"></div>
<span class="lb" style="left:973px;top:451px">Nm</span>
<span class="lb" style="left:790px;top:473.5px">Abgasnorm:</span>
<div class="in ph" style="left:867px;top:470px;width:104px">z.B. Euro 5</div>
<div class="gt" style="left:972px;top:470px"><b>&gt;</b></div>
<span class="lb" style="left:790px;top:498px">Getriebe:</span>
<div class="in ph" style="left:867px;top:493px;width:104px">z.B. Schaltgetriebe</div>
<div class="gt" style="left:972px;top:493px"><b>&gt;</b></div>
<div class="btn" style="left:508px;top:553px;width:129px;height:23px;border-color:#0c92f0;color:#fff;font-size:12px;line-height:22px;text-align:center;letter-spacing:0">OK</div>
<div class="btn" style="left:646px;top:553px;width:129px;height:23px;border-color:#a83838;background:#8c1216;color:#fff;font-size:11px;line-height:22px;text-align:center;letter-spacing:-0.2px">Fahrzeugdaten suchen</div>
<div class="btn" style="left:775px;top:553px;width:24px;height:23px;border-color:#606062"></div>
<div class="btn" style="left:807px;top:553px;width:27px;height:23px;border-color:#606062"></div>
<div class="btn" style="left:840px;top:553px;width:27px;height:23px;border-color:#606062"></div>
<div class="btn" style="left:873px;top:553px;width:27px;height:23px;border-color:#606062"></div>
<div class="btn" style="left:930px;top:553px;width:27px;height:23px;border-color:#606062"></div>
<div class="btn" style="left:966px;top:553px;width:27px;height:23px;border-color:#606062"></div>
<div class="btn" style="left:992px;top:553px;width:13px;height:23px;border-color:#606062"></div>
<div class="btn" style="left:900px;top:553px;width:24px;height:23px;border-color:#0a7ad4;color:#fff;font-size:11px;line-height:22px;text-align:center;letter-spacing:0">&lt;&lt;</div>
<span class="lb" style="left:940px;top:558px;font-size:12px">§</span>
<svg class="ab" style="left:778px;top:557px" width="16" height="15" viewBox="0 0 16 15"><rect x="0.5" y="2.5" width="12" height="11" rx="1" fill="#d8cf7a" stroke="#a89c50"/><rect x="3.5" y="0.8" width="6" height="3" rx="1" fill="#e8e8d0" stroke="#b0a860" stroke-width="0.8"/><rect x="6.5" y="6.5" width="8" height="7" fill="#fff" stroke="#1a6fd0"/><path d="M8.5 9 H12.5 M8.5 11 H12.5" stroke="#1a6fd0" stroke-width="1"/></svg>
<svg class="ab" style="left:812px;top:555px" width="19" height="18" viewBox="0 0 19 18"><circle cx="8" cy="8" r="7.3" fill="#f4f4f4"/><circle cx="8" cy="8" r="6.2" fill="#35e0e8"/><path d="M2.2 6 Q3 2.5 6.5 2.2 Q6 5 4.5 7 Q5 10 3.5 11.5 Q2 9 2.2 6 Z" fill="#3bd23b"/><path d="M9 2 Q12.5 2.5 13.8 6 Q12 7 10.5 5.5 Q9.5 4 9 2 Z" fill="#3bd23b"/><path d="M6 12.5 Q8 11 10 13.5 Q8 14.5 6 12.5 Z" fill="#f4f4f4"/><path d="M10 5.5 H14 V10.5 H16.5 L12 16 L7.5 10.5 H10 Z" fill="#1f5cf0" stroke="#1438a8" stroke-width="0.6"/></svg>
<svg class="ab" style="left:845px;top:555px" width="19" height="18" viewBox="0 0 19 18"><circle cx="8" cy="8" r="7.3" fill="#f4f4f4"/><circle cx="8" cy="8" r="6.2" fill="#35e0e8"/><path d="M2.2 6 Q3 2.5 6.5 2.2 Q6 5 4.5 7 Q5 10 3.5 11.5 Q2 9 2.2 6 Z" fill="#3bd23b"/><path d="M9 2 Q12.5 2.5 13.8 6 Q12 7 10.5 5.5 Q9.5 4 9 2 Z" fill="#3bd23b"/><path d="M6 12.5 Q8 11 10 13.5 Q8 14.5 6 12.5 Z" fill="#f4f4f4"/><path d="M10 16 H14 V11 H16.5 L12 5.5 L7.5 11 H10 Z" fill="#f04848" stroke="#b82020" stroke-width="0.6"/></svg>
<svg class="ab" style="left:879px;top:558px" width="15" height="12" viewBox="0 0 15 12"><rect x="0.5" y="0.5" width="13" height="7.5" rx="3.2" fill="#fff"/><path d="M8 7.5 H11.5 L10 11 Z" fill="#fff"/><path d="M11.8 7.5 L10.3 11.2" stroke="#111" stroke-width="1"/></svg>
<svg class="ab" style="left:970px;top:555px" width="17" height="16" viewBox="0 0 17 16"><path d="M3.5 0.5 H13 L16 3.5 V15.5 H3.5 Z" fill="#f4f6fa" stroke="#c8ccd4" stroke-width="0.8"/><path d="M6 3.5 H12 M9 5.5 H14.5 M9 7.5 H14.5 M9 9.5 H14.5 M9 11.5 H14.5 M6 13.5 H14.5" stroke="#8fa8d8" stroke-width="0.9"/><circle cx="5.5" cy="8" r="3.3" fill="#5a80c0"/><circle cx="5.5" cy="8" r="1.5" fill="#e8eef8"/><path d="M5.5 3.8 V12.2 M1.3 8 H9.7 M2.5 5 L8.5 11 M8.5 5 L2.5 11" stroke="#5a80c0" stroke-width="1.3"/><circle cx="5.5" cy="8" r="1.5" fill="#e8eef8"/></svg>
<svg class="ab" style="left:996.5px;top:562.3px" width="4" height="3" viewBox="0 0 4 3"><path d="M0 0 H4 L2 2.5 Z" fill="#e0e0e0"/></svg>
</body></html>
